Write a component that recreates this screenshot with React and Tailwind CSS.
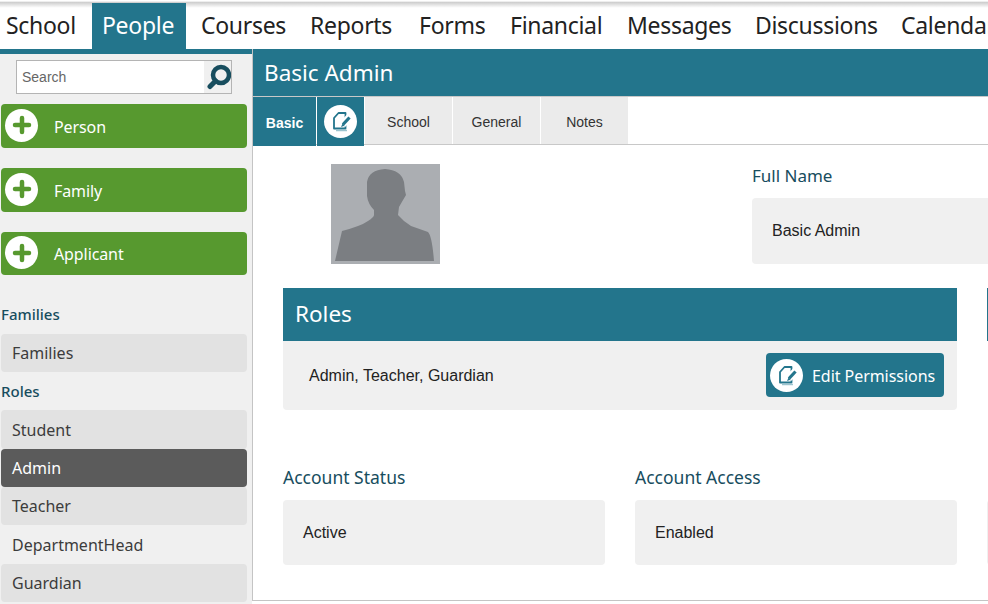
import { Plus } from "lucide-react";

const sans = "font-['Noto_Sans',sans-serif]";
const arial = "font-['Liberation_Sans',Arial,sans-serif]";

const navItems = [
  { label: "School", width: "w-[92px]", pad: "pl-[6px]" },
  { label: "People", width: "w-[94px]", pad: "pl-[10px]", active: true },
  { label: "Courses", width: "w-[109px]", pad: "pl-[15px]" },
  { label: "Reports", width: "w-[109px]", pad: "pl-[15px]" },
  { label: "Forms", width: "w-[91px]", pad: "pl-[15px]" },
  { label: "Financial", width: "w-[117px]", pad: "pl-[15px]" },
  { label: "Messages", width: "w-[128px]", pad: "pl-[15px]" },
  { label: "Discussions", width: "w-[146px]", pad: "pl-[15px]" },
  { label: "Calendar", width: "w-[120px]", pad: "pl-[15px]" },
];

function EditIcon({ size = 33 }) {
  return (
    <svg width={size} height={size} viewBox="0 0 33 33" className="shrink-0">
      <circle cx="16.5" cy="16.5" r="16.5" fill="#fff" />
      <path d="M10 13 L14.5 8 L21.5 8 L21.5 23.5 L10 23.5 Z" fill="none" stroke="#23758c" strokeWidth="1.8" strokeLinejoin="round" />
      <path d="M25.5 12 L18.5 19.5" stroke="#fff" strokeWidth="7" />
      <path d="M25.5 12.5 L19 19.5" stroke="#23758c" strokeWidth="3.2" />
      <path d="M18.5 18.5 L17 22 L20.5 20.8 Z" fill="#23758c" />
      <path d="M12 25.5 L23 25.5" stroke="#9cc4cf" strokeWidth="1.5" />
    </svg>
  );
}

function AddButton({ label, className }) {
  return (
    <div className={`flex items-center rounded-[4px] bg-[#57992f] pl-[4px] ${className}`}>
      <span className="flex h-[33px] w-[33px] -translate-y-[1px] items-center justify-center rounded-full bg-white">
        <Plus size={24} strokeWidth={4.5} className="text-[#57992f]" />
      </span>
      <span className={`ml-[16px] pt-[1px] text-[16px] tracking-[-0.1px] text-white ${sans}`}>{label}</span>
    </div>
  );
}

function SideItem({ label, active, plain, className = "" }) {
  const tone = active
    ? "bg-[#5b5b5b] text-white"
    : plain
      ? "text-[#3c3c3c]"
      : "bg-[#e2e2e2] text-[#3c3c3c]";
  return (
    <div className={`flex items-center rounded-[4px] pl-[11px] text-[16px] ${sans} ${tone} ${className}`}>
      {label}
    </div>
  );
}

function Field({ label, value, className = "" }) {
  return (
    <div className={className}>
      <div className={`mb-[11px] h-[22px] text-[17.5px] leading-[20px] text-[#174d5e] ${sans}`}>{label}</div>
      <div className={`flex h-[65px] items-center rounded-[4px] bg-[#f0f0f0] pl-[20px] text-[16px] text-[#222] ${arial}`}>
        {value}
      </div>
    </div>
  );
}

export default function App() {
  return (
    <div className="relative h-[604px] w-[988px] overflow-hidden bg-white">
      {/* top nav */}
      <nav className="flex h-[49px] items-end overflow-hidden bg-white bg-gradient-to-b from-white from-[2%] via-[#cfcfcf] via-[5%] to-white to-[16%]">
        {navItems.map((item) => (
          <div
            key={item.label}
            className={`flex h-[46px] shrink-0 items-center whitespace-nowrap pb-[2px] text-[23px] tracking-[-0.3px] ${sans} ${item.width} ${item.pad} ${item.active ? "bg-[#23758c] text-white" : "text-[#222]"}`}
          >
            {item.label}
          </div>
        ))}
      </nav>

      <div className="flex h-[555px]">
        {/* sidebar */}
        <aside className="w-[252px] shrink-0 border-t-[5px] border-[#23758c] bg-[#f0f0f0] pl-[1px] pr-[5px]">
          <div className="mt-[6px] ml-[15px] flex h-[34px] w-[216px] border border-[#b4b4b4]">
            <div className={`flex w-[187px] items-center bg-white pl-[5px] text-[14px] text-[#666] ${arial}`}>Search</div>
            <div className="flex flex-1 items-center justify-center">
              <svg width="26" height="26" viewBox="0 0 26 26">
                <circle cx="16" cy="11" r="8" fill="none" stroke="#174d5e" strokeWidth="4.5" />
                <path d="M10.5 17 L5 22.5" stroke="#174d5e" strokeWidth="5" strokeLinecap="round" />
              </svg>
            </div>
          </div>
          <AddButton label="Person" className="mt-[10px] h-[44px]" />
          <AddButton label="Family" className="mt-[20px] h-[44px]" />
          <AddButton label="Applicant" className="mt-[20px] h-[43px]" />

          <div className={`mt-[28px] h-[22px] text-[15px] font-medium leading-[22px] text-[#174d5e] ${sans}`}>Families</div>
          <SideItem label="Families" className="mt-[9px] h-[38px]" />
          <div className={`mt-[8px] h-[22px] text-[15px] font-medium leading-[22px] text-[#174d5e] ${sans}`}>Roles</div>
          <SideItem label="Student" className="mt-[8px] h-[39px]" />
          <SideItem label="Admin" active className="h-[38px]" />
          <SideItem label="Teacher" className="h-[38px]" />
          <SideItem label="DepartmentHead" plain className="h-[39px]" />
          <SideItem label="Guardian" className="h-[38px]" />
        </aside>

        {/* main */}
        <main className="flex h-[552px] min-w-0 flex-1 flex-col border-b border-l border-[#c4c4c4]">
          <h1 className={`flex h-[47px] shrink-0 items-center bg-[#23758c] pl-[11px] text-[22.5px] text-white ${sans}`}>Basic Admin</h1>

          <div className="flex h-[49px] shrink-0 border-t border-b border-t-[#c8c8c8] border-b-[#c8c8c8]">
            <div className={`flex h-[49px] w-[63px] items-center justify-center bg-[#23758c] pt-[3px] text-[14px] font-bold text-white ${arial}`}>Basic</div>
            <div className="ml-[1px] flex h-[49px] w-[47px] items-center justify-center bg-[#23758c]">
              <EditIcon />
            </div>
            {["School", "General", "Notes"].map((tab) => (
              <div key={tab} className={`ml-[1px] flex h-[47px] w-[87px] items-center justify-center bg-[#ebebeb] pt-[4px] text-[14px] text-[#333] ${arial}`}>
                {tab}
              </div>
            ))}
          </div>

          <div className="mt-[19px] flex h-[100px] shrink-0">
            <div className="ml-[78px] h-[100px] w-[109px] bg-[#abaeb2]">
              <svg width="109" height="100" viewBox="0 0 109 100">
                <path d="M4 97 L11 67 Q30 62 37 57 Q43 53 43 51 L43 46 Q37 40 36 32 L36 18 Q38 6 54 5 Q70 6 73 18 L74 27 L75 31 Q72 36 68 43 L67 51 Q72 57 80 62 L97 68 Q101 72 103 97 Z" fill="#7b7e82" />
              </svg>
            </div>
            <div className="ml-[312px] w-[300px] shrink-0">
              <div className={`mt-[1px] h-[24px] text-[17px] leading-[22px] text-[#174d5e] ${sans}`}>Full Name</div>
              <div className={`mt-[9px] flex h-[66px] items-center rounded-[4px] bg-[#f0f0f0] pl-[20px] text-[16px] text-[#222] ${arial}`}>Basic Admin</div>
            </div>
          </div>

          <div className="mt-[24px] flex shrink-0">
            <section className="ml-[30px] w-[674px] shrink-0">
              <h2 className={`flex h-[53px] items-center bg-[#23758c] pb-[1px] pl-[12px] text-[22.5px] text-white ${sans}`}>Roles</h2>
              <div className="flex h-[69px] items-start justify-between rounded-b-[4px] bg-[#f0f0f0] pl-[26px] pr-[13px] pt-[12px]">
                <span className={`mt-[11px] text-[16px] text-[#222] ${arial}`}>Admin, Teacher, Guardian</span>
                <div className={`flex h-[44px] w-[178px] items-center rounded-[4px] bg-[#23758c] pl-[4px] text-[16px] tracking-[-0.05px] text-white ${sans}`}>
                  <EditIcon />
                  <span className="ml-[9px] whitespace-nowrap pt-[2px]">Edit Permissions</span>
                </div>
              </div>
            </section>
            <div className="ml-[30px] h-[53px] w-[2px] shrink-0 bg-[#23758c]" />
          </div>

          <div className="mt-[57px] flex shrink-0">
            <Field label="Account Status" value="Active" className="ml-[30px] w-[322px] shrink-0" />
            <Field label="Account Access" value="Enabled" className="ml-[30px] w-[322px] shrink-0" />
            <Field label="" value="" className="ml-[30px] w-[322px] shrink-0" />
          </div>
        </main>
      </div>
    </div>
  );
}
